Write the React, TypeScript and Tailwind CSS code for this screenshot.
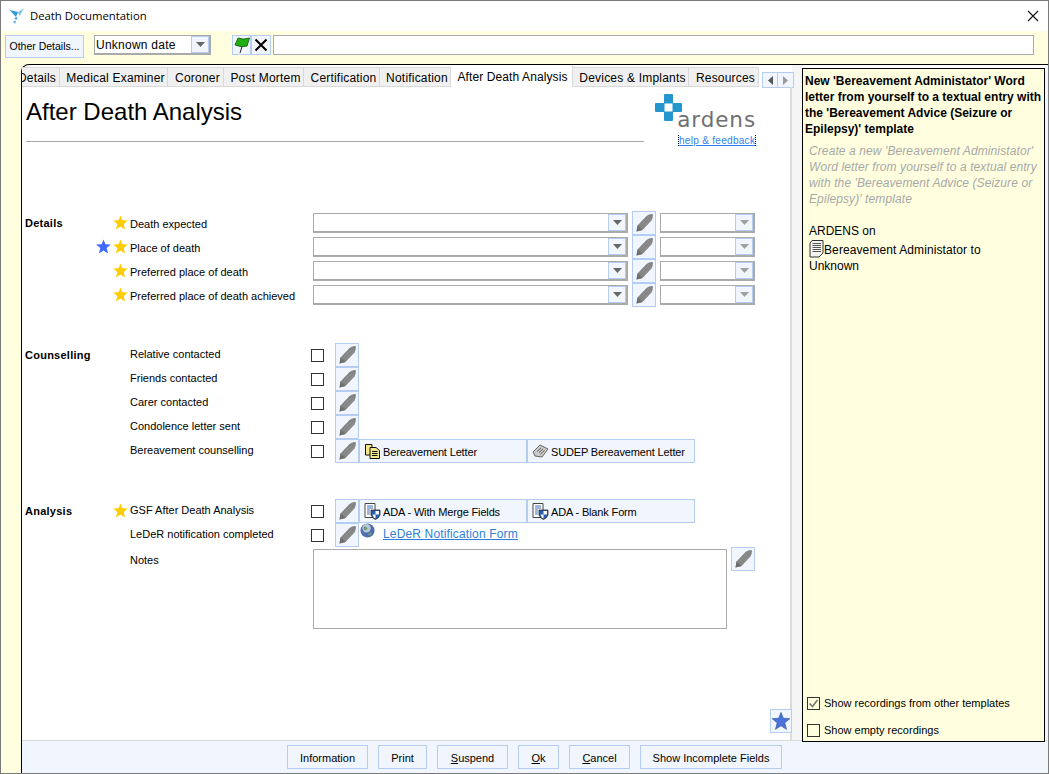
const Pencil = () => (
  <svg width="17" height="18" viewBox="0 0 17 18">
    <path d="M0.5 17.5 L1.5 11.5 L10.5 2 Q14 -0.5 16.8 0.2 Q17.3 3.5 15.5 6.5 L6.5 16 Z" fill="#858585" />
    <path d="M5 11.5 L12.5 3.5 M8 12.5 L15 5" stroke="#9c9c9c" strokeWidth="0.6" fill="none" />
    <path d="M0.5 17.5 L1.5 11.5 L6.5 16 Z" fill="#6e6e6e" />
  </svg>
);

const Star = ({ color = "#ffcc00", size = 15 }: { color?: string; size?: number }) => (
  <svg width={size} height={size} viewBox="0 0 20 20">
    <polygon points="10,0.5 12.6,7 19.8,7.4 14.2,12 16.1,19.3 10,15.3 3.9,19.3 5.8,12 0.2,7.4 7.4,7" fill={color} />
  </svg>
);

const Arrow = ({ color = "#666" }: { color?: string }) => (
  <svg width="9" height="5" viewBox="0 0 9 5">
    <polygon points="0,0 9,0 4.5,5" fill={color} />
  </svg>
);

const PencilButton = () => (
  <button className="flex h-6 w-6 shrink-0 items-center justify-center border border-[#b4cdf0] bg-[#f1f5fd]">
    <Pencil />
  </button>
);

const Checkbox = ({ checked = false }: { checked?: boolean }) => (
  <span className="flex h-[13px] w-[13px] shrink-0 items-center justify-center border border-[#333] bg-transparent">
    {checked && (
      <svg width="11" height="11" viewBox="0 0 11 11">
        <path d="M1.5 5.5 L4.5 8.5 L9.5 2" stroke="#777" strokeWidth="1.6" fill="none" />
      </svg>
    )}
  </span>
);

const Select = ({ width, muted = false }: { width: string; muted?: boolean }) => (
  <div className={`flex h-5 items-stretch justify-end border-2 border-[#aaaaaa] border-l border-t bg-white ${width}`}>
    <span className="flex w-[18px] items-center justify-center border border-[#b4cdf0] bg-[#f1f5fd]">
      <Arrow color={muted ? "#a0a0a0" : "#666"} />
    </span>
  </div>
);

const DocShield = () => (
  <svg width="17" height="17" viewBox="0 0 17 17">
    <path d="M1 0.5 H11 V14.5 H1 Z" fill="#fff" stroke="#444" />
    <path d="M3 3 H9 M3 5 H9 M3 7 H6 M3 9 H6 M3 11 H6" stroke="#3f6fb5" />
    <path d="M7 7 H16 V12 Q15 15 11.5 16.5 Q8 15 7 12 Z" fill="#2a5db0" stroke="#222" strokeWidth="0.7" />
    <path d="M11.5 8 H15 V11.5 H11.5 Z M8.5 11.5 H11.5 V15 H10 Z" fill="#fff" />
  </svg>
);

const Letters = () => (
  <svg width="15" height="15" viewBox="0 0 15 15">
    <path d="M0.5 0.5 H7 V11 H0.5 Z" fill="#f4e98a" stroke="#111" />
    <path d="M5 3.5 H11 L14.5 6.5 V14.5 H5 Z" fill="#f4e98a" stroke="#111" />
    <path d="M7 7.5 H12.5 M7 9.5 H12.5 M7 11.5 H12.5" stroke="#111" />
  </svg>
);

const Scroll = () => (
  <svg width="17" height="15" viewBox="0 0 17 15">
    <path d="M1 8 L8 1 L16 5 L10 13 L3 12 Z" fill="#c9c9c9" stroke="#666" />
    <path d="M5 7.5 L9 4 M7 8.5 L11 5 M8.5 10 L12.5 6.5" stroke="#666" />
  </svg>
);

const Globe = () => (
  <svg width="15" height="15" viewBox="0 0 16 16">
    <circle cx="8" cy="8" r="7.5" fill="#4d6fb0" />
    <circle cx="7" cy="5.5" r="4.5" fill="#b9c6d8" />
    <path d="M4 4 Q7 3 8 6 Q6 9 4 7 Z M9 11 Q12 9 13 11 Q11 14 9 13 Z" fill="#6f9a78" />
  </svg>
);

const ActionButton = ({ icon, label }: { icon: React.ReactNode; label: string }) => (
  <button className="flex h-6 w-[168px] shrink-0 items-center gap-[2px] border border-[#b4cdf0] bg-[#f1f5fd] pl-[3px] text-left">
    <span className="flex w-[18px] justify-center">{icon}</span>
    <span className="mt-[2px] tracking-[-0.15px]">{label}</span>
  </button>
);

type RowProps = {
  section?: string;
  label: string;
  gold?: boolean;
  blue?: boolean;
  labelClass: string;
  children?: React.ReactNode;
};

const Row = ({ section, label, gold, blue, labelClass, children }: RowProps) => (
  <div className="flex h-6 items-center">
    <div className="w-[74px] shrink-0 pl-[3px] font-bold tracking-[0.25px]">{section}</div>
    <div className="flex w-[17px] shrink-0 pb-[1px]">{blue && <Star color="#4169ff" />}</div>
    <div className="flex w-[17px] shrink-0 pb-[1px]">{gold && <Star />}</div>
    <div className={`w-[181px] shrink-0 ${labelClass}`}>{label}</div>
    {children}
  </div>
);

const DetailsControls = () => (
  <div className="flex items-center">
    <div className="ml-[2px] mr-1">
      <Select width="w-[315px]" />
    </div>
    <PencilButton />
    <div className="ml-1">
      <Select width="w-[95px]" muted />
    </div>
  </div>
);

const CheckPencil = ({ children }: { children?: React.ReactNode }) => (
  <div className="flex items-center">
    <div className="w-6">
      <Checkbox />
    </div>
    <PencilButton />
    {children}
  </div>
);

const Tab = ({ label, width, active }: { label: string; width: string; active?: boolean }) =>
  active ? (
    <div className={`flex h-[22px] shrink-0 items-start justify-center border-r border-[#d9d9d9] bg-white pl-[2px] pt-[6px] tracking-[0.1px] ${width}`}>
      {label}
    </div>
  ) : (
    <div className={`flex h-5 shrink-0 items-center justify-center border-y border-r border-[#d9d9d9] bg-[#f0f0f0] pl-[4px] pt-[2px] ${width}`}>
      {label}
    </div>
  );

const FootButton = ({ width, children }: { width: string; children: React.ReactNode }) => (
  <button className={`flex h-6 items-center justify-center border border-[#b4cdf0] bg-[#f1f5fd] pt-[2px] ${width}`}>
    {children}
  </button>
);

export default function App() {
  return (
    <div className="flex h-[774px] w-[1049px] flex-col overflow-hidden border border-[#7a7a7a] bg-white font-['Liberation_Sans',Arial,sans-serif] text-[11px] leading-none text-black">
      <div className="flex h-[30px] shrink-0 items-center justify-between pl-2 pr-[9px]">
        <div className="flex items-center gap-[5px]">
          <svg width="16" height="16" viewBox="0 0 16 16">
            <path d="M0.5 2 L9 4 L7 9 Z" fill="#2f9bd8" />
            <path d="M9 4 L15 0.5 L10.5 8 Z" fill="#7cc4ea" />
            <path d="M5 10 L8.5 9 L7.5 12 Z" fill="#2f9bd8" />
            <path d="M4.5 13 L7 12.5 L6.5 15.5 L4.5 15 Z" fill="#6bb7e3" />
          </svg>
          <span className="font-['Open_Sans',sans-serif] text-[11.3px]">Death Documentation</span>
        </div>
        <svg width="12" height="12" viewBox="0 0 12 12">
          <path d="M1 1 L11 11 M11 1 L1 11" stroke="#111" strokeWidth="1.1" />
        </svg>
      </div>

      <div className="flex h-[33px] shrink-0 items-start bg-[#ffffe0] pl-1 pt-1">
        <button className="h-[23px] w-[79px] border border-[#b4cdf0] bg-[#f1f5fd] text-[10.5px]">Other Details...</button>
        <div className="ml-[10px] flex h-5 w-[117px] items-stretch justify-between border-2 border-[#aaaaaa] border-l border-t bg-white pl-[1px] text-[12px]">
          <span className="self-center tracking-[0.25px]">Unknown date</span>
          <span className="flex w-[18px] items-center justify-center border border-[#b4cdf0] bg-[#f1f5fd]">
            <Arrow />
          </span>
        </div>
        <button className="ml-[21px] flex h-5 w-[19px] items-center justify-center border border-[#b4cdf0] bg-[#f1f5fd]">
          <svg width="16" height="17" viewBox="0 0 16 17">
            <path d="M4 1 Q9 3 15.5 1 L13 9 Q8 11 1 8 Z" fill="#1fb011" stroke="#0b4f06" strokeWidth="0.8" />
            <path d="M8 9.5 L6 16" stroke="#222" strokeWidth="1" />
          </svg>
        </button>
        <button className="flex h-5 w-5 items-center justify-center border border-[#b4cdf0] bg-[#f1f5fd]">
          <svg width="14" height="14" viewBox="0 0 14 14">
            <path d="M1.5 1.5 L12.5 12.5 M12.5 1.5 L1.5 12.5" stroke="#000" strokeWidth="2" />
          </svg>
        </button>
        <div className="ml-[2px] h-5 w-[761px] border border-[#aaaaaa] bg-white" />
      </div>

      <div className="flex min-h-0 flex-1 bg-[#ffffe0]">
        <div className="w-5 shrink-0" />
        <div className="flex min-w-0 flex-1 flex-col rounded-tl-[8px] border-l border-t border-black bg-white">
          <div className="flex min-h-0 flex-1">
            <div className="relative flex w-[770px] shrink-0 flex-col">
              <div className="flex h-[22px] shrink-0 items-end text-[12px] tracking-[0.2px]">
                <div className="flex h-5 w-[38px] shrink-0 items-center justify-end overflow-hidden border-y border-r border-[#d9d9d9] bg-[#f0f0f0] pr-[3px] pt-[2px]">
                  <span className="whitespace-nowrap">Details</span>
                </div>
                <Tab label="Medical Examiner" width="w-[108px]" />
                <Tab label="Coroner" width="w-[56px]" />
                <Tab label="Post Mortem" width="w-[80px]" />
                <Tab label="Certification" width="w-[76px]" />
                <Tab label="Notification" width="w-[71px]" />
                <Tab label="After Death Analysis" width="w-[122px]" active />
                <Tab label="Devices & Implants" width="w-[116px]" />
                <Tab label="Resources" width="w-[70px]" />
                <div className="mb-[-1px] ml-[3px] flex h-[16px]">
                  <span className="flex w-4 items-center justify-center border border-[#b4cdf0] bg-[#f1f5fd]">
                    <svg width="5" height="9" viewBox="0 0 5 9"><polygon points="5,0 5,9 0,4.5" fill="#555" /></svg>
                  </span>
                  <span className="flex w-4 items-center justify-center border border-l-0 border-[#b4cdf0] bg-[#f1f5fd]">
                    <svg width="5" height="9" viewBox="0 0 5 9"><polygon points="0,0 0,9 5,4.5" fill="#999" /></svg>
                  </span>
                </div>
              </div>

              <div className="flex min-h-0 flex-1 flex-col border-r-2 border-[#dcdcdc]">
                <div className="flex h-[124px] shrink-0">
                  <div className="ml-1 w-[618px] shrink-0">
                    <h1 className="mt-[11px] h-[44px] border-b border-[#aaaaaa] text-[24px] leading-[27px]">After Death Analysis</h1>
                  </div>
                  <div className="ml-[11px] flex w-[101px] shrink-0 flex-col">
                    <div className="relative mt-[7px] h-[41px]">
                      <svg width="28" height="28" viewBox="0 0 28 28">
                        <path d="M10 0 H17 Q18 0 18 1 V9 H26 Q27 9 27 10 V17 Q27 18 26 18 H18 V26 Q18 27 17 27 H10 Q9 27 9 26 V18 H1 Q0 18 0 17 V10 Q0 9 1 9 H9 V1 Q9 0 10 0 Z" fill="#2596cd" />
                        <rect x="9.5" y="9.5" width="8" height="8" fill="#fff" />
                      </svg>
                      <span className="absolute right-0 top-[14px] font-['DejaVu_Sans',sans-serif] text-[21.5px] leading-[24px] tracking-[0.9px] text-[#6e7073]">ardens</span>
                    </div>
                    <a className="ml-[23px] w-[78px] whitespace-nowrap border-x border-dotted border-black text-center text-[10px] leading-[11px] tracking-[0.3px] text-[#2f80ed] underline">
                      help &amp; feedback
                    </a>
                  </div>
                </div>

                <Row section="Details" label="Death expected" gold labelClass="mt-[2px]"><DetailsControls /></Row>
                <Row label="Place of death" gold blue labelClass="mt-[2px]"><DetailsControls /></Row>
                <Row label="Preferred place of death" gold labelClass="mt-[2px]"><DetailsControls /></Row>
                <Row label="Preferred place of death achieved" gold labelClass="mt-[2px]"><DetailsControls /></Row>

                <div className="h-9 shrink-0" />

                <Row section="Counselling" label="Relative contacted" labelClass="mb-[2px]"><CheckPencil /></Row>
                <Row label="Friends contacted" labelClass="mb-[2px]"><CheckPencil /></Row>
                <Row label="Carer contacted" labelClass="mb-[2px]"><CheckPencil /></Row>
                <Row label="Condolence letter sent" labelClass="mb-[2px]"><CheckPencil /></Row>
                <Row label="Bereavement counselling" labelClass="mb-[2px]">
                  <CheckPencil>
                    <ActionButton icon={<Letters />} label="Bereavement Letter" />
                    <ActionButton icon={<Scroll />} label="SUDEP Bereavement Letter" />
                  </CheckPencil>
                </Row>

                <div className="h-9 shrink-0" />

                <Row section="Analysis" label="GSF After Death Analysis" gold labelClass="mb-[2px]">
                  <CheckPencil>
                    <ActionButton icon={<DocShield />} label="ADA - With Merge Fields" />
                    <ActionButton icon={<DocShield />} label="ADA - Blank Form" />
                  </CheckPencil>
                </Row>
                <Row label="LeDeR notification completed" labelClass="mb-[2px]">
                  <CheckPencil>
                    <span className="ml-[1px] flex h-6 items-start"><Globe /></span>
                    <a className="mb-[2px] ml-2 text-[12px] tracking-[0.15px] text-[#2f7fd8] underline">LeDeR Notification Form</a>
                  </CheckPencil>
                </Row>
                <div className="flex shrink-0 items-start">
                  <div className="w-[108px] shrink-0" />
                  <div className="mt-[8px] w-[183px] shrink-0">Notes</div>
                  <div className="mt-[2px] h-20 w-[414px] border border-[#aaaaaa] bg-white" />
                  <div className="ml-1"><PencilButton /></div>
                </div>
              </div>

              <button className="absolute bottom-[7px] right-0 flex h-6 w-[22px] items-center justify-center border border-[#b4cdf0] bg-[#f1f5fd]">
                <svg width="18" height="18" viewBox="0 0 20 20">
                  <polygon points="10,0.5 12.6,7 19.8,7.4 14.2,12 16.1,19.3 10,15.3 3.9,19.3 5.8,12 0.2,7.4 7.4,7" fill="#4a72d8" stroke="#3a5aa8" strokeWidth="0.8" />
                </svg>
              </button>
            </div>

            <div className="flex w-[10px] shrink-0 bg-[#f5f5f5]" />

            <div className="relative z-10 mb-[-2px] mt-[3px] flex w-[243px] shrink-0 flex-col border border-black bg-[#ffffe0] pl-[2px]">
              <p className="mt-[4px] text-[12px] font-bold leading-4">
                New 'Bereavement Administator' Word letter from yourself to a textual entry with the 'Bereavement Advice (Seizure or Epilepsy)' template
              </p>
              <p className="ml-1 mt-[6px] w-[232px] text-[12px] italic leading-4 tracking-[0.1px] text-[#a8a8a8]">
                Create a new 'Bereavement Administator' Word letter from yourself to a textual entry with the 'Bereavement Advice (Seizure or Epilepsy)' template
              </p>
              <div className="ml-1 mt-[16px] text-[12px] leading-4">
                <div>ARDENS on</div>
                <div className="flex h-[19px] items-end">
                  <svg width="15" height="18" viewBox="0 0 15 18">
                    <path d="M3 0.5 H14 V13 L10 17 H1 V3 Z" fill="#f5f5f0" stroke="#333" />
                    <path d="M3.5 3.5 H12 M3.5 5.5 H12 M3.5 7.5 H12 M3.5 9.5 H12 M3.5 11.5 H12" stroke="#555" />
                  </svg>
                  <span className="tracking-[0.1px]">Bereavement Administator to</span>
                </div>
                <div>Unknown</div>
              </div>
              <div className="mt-auto flex flex-col gap-[14px] pb-1 pl-[2px]">
                <label className="flex items-center gap-1"><Checkbox checked />Show recordings from other templates</label>
                <label className="flex items-center gap-1"><Checkbox />Show empty recordings</label>
              </div>
            </div>

            <div className="flex-1 bg-[#f1f5fd]" />
          </div>

          <div className="flex h-[33px] shrink-0 items-start gap-[10px] border-t border-[#d9d9d9] bg-[#f1f5fd] pl-[265px] pt-1">
            <FootButton width="w-[81px]">Information</FootButton>
            <FootButton width="w-[49px]">Print</FootButton>
            <FootButton width="w-[71px]"><span><u>S</u>uspend</span></FootButton>
            <FootButton width="w-[41px]"><span><u>O</u>k</span></FootButton>
            <FootButton width="w-[61px]"><span><u>C</u>ancel</span></FootButton>
            <FootButton width="w-[142px]">Show Incomplete Fields</FootButton>
          </div>
        </div>
      </div>
    </div>
  );
}
